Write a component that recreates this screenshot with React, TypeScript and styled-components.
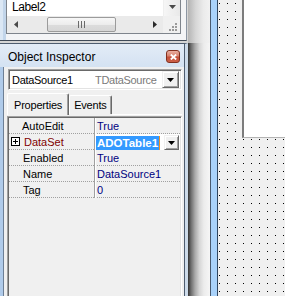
import React from "react";
import styled, { createGlobalStyle } from "styled-components";

const GlobalStyle = createGlobalStyle`
  html, body { margin: 0; padding: 0; }
  body {
    background: #f0f0f0;
    font-family: "Liberation Sans", Arial, sans-serif;
    font-size: 11px;
    color: #000;
    overflow: hidden;
  }
  * { box-sizing: border-box; }
`;

const Screen = styled.div`
  width: 285px;
  height: 296px;
  display: flex;
  overflow: hidden;
  background: #f0f0f0;
`;

const LeftCol = styled.div`
  width: 188px;
  flex: none;
  display: flex;
  flex-direction: column;
  background: #d6d6d6;
`;

/* ---------- top window (partially visible) ---------- */
const TopWin = styled.div`
  height: 41px;
  width: 187px;
  flex: none;
  display: flex;
  flex-direction: column;
  background: linear-gradient(to right, #dbe7f4 0 3px, #c2d5ea 3px 6px, #f3f4f6 6px);
  border-bottom: 1px solid #404a57;
  border-right: 1px solid #8c96a3;
`;

const ListBox = styled.div`
  margin-left: 6px;
  width: 175px;
  height: 34px;
  flex: none;
  border: 1px solid #7e848c;
  border-top: none;
  background: #fff;
  display: grid;
  grid-template-columns: 1fr 17px;
  grid-template-rows: 16px 17px;
`;

const ListItems = styled.div`
  padding-left: 5px;
  font-size: 12px;
  line-height: 15px;
  letter-spacing: -0.4px;
`;

const VScrollEnd = styled.div`
  background: linear-gradient(to right, #f6f6f6, #e9e9e9);
  border-left: 1px solid #efefef;
  display: flex;
  justify-content: center;
  padding-top: 5px;
`;

const HScroll = styled.div`
  display: flex;
  align-items: center;
  background: #eaeaea;
`;

const ArrowBtn = styled.div`
  width: 17px;
  height: 17px;
  flex: none;
  display: flex;
  align-items: center;
  justify-content: center;
`;

const Track = styled.div`
  flex: 1;
  display: flex;
  align-items: center;
  padding-left: 23px;
`;

const Thumb = styled.div`
  width: 69px;
  height: 15px;
  border: 1px solid #9b9b9b;
  border-radius: 2px;
  background: linear-gradient(#f7f7f7, #ececec 50%, #dcdcdc 51%, #d6d6d6);
  display: flex;
  align-items: center;
  justify-content: center;
`;

const GripCell = styled.div`
  background: #f0f0f0;
  display: flex;
  align-items: flex-end;
  justify-content: flex-end;
  padding: 0 3px 2px 0;
`;

/* ---------- object inspector window ---------- */
const OIWin = styled.div`
  flex: 1;
  width: 188px;
  margin-top: 2px;
  display: flex;
  flex-direction: column;
  border-top: 1px solid #4e5d70;
  border-right: 3px solid #cddbea;
`;

const InnerWin = styled.div`
  flex: 1;
  display: flex;
  flex-direction: column;
  border-right: 1px solid #4e5d70;
`;

const TitleBar = styled.div`
  height: 23px;
  flex: none;
  display: flex;
  align-items: center;
  padding: 2px 4px 0 8px;
  background: linear-gradient(#e3ecf7, #d4e2f2);
`;

const TitleText = styled.span`
  flex: 1;
  font-size: 12px;
  color: #000;
`;

const CloseBtn = styled.div`
  width: 14px;
  height: 13px;
  border-radius: 3px;
  border: 1px solid #82301f;
  background: linear-gradient(#eab0a2, #d6806c 45%, #c4503a 55%, #cc6048);
  display: flex;
  align-items: center;
  justify-content: center;
`;

const Body = styled.div`
  flex: 1;
  display: flex;
`;

const LeftFrame = styled.div`
  width: 4px;
  flex: none;
  background: #b0cbea;
  border-right: 1px solid #6d7f95;
`;

const Client = styled.div`
  flex: 1;
  background: #f0f0f0;
  padding: 2px 2px 0 3px;
  display: flex;
  flex-direction: column;
`;

const Combo = styled.div`
  margin-left: 1px;
  height: 21px;
  flex: none;
  display: flex;
  align-items: center;
  border: 1px solid;
  border-color: #a0a0a0 #ffffff #ffffff #a0a0a0;
  box-shadow: inset 1px 1px #696969, inset -1px -1px #e3e3e3;
  background: #fff;
  padding: 2px 2px 2px 3px;
  letter-spacing: -0.3px;
  white-space: nowrap;
`;

const ComboName = styled.span`
  width: 83px;
  flex: none;
`;

const ComboType = styled.span`
  flex: 1;
  color: #7a7a7a;
  overflow: hidden;
`;

const DropBtn = styled.div<{ $w: number; $h: number }>`
  width: ${(p) => p.$w}px;
  height: ${(p) => p.$h}px;
  flex: none;
  margin-left: auto;
  background: #f0f0f0;
  border: 1px solid;
  border-color: #f0f0f0 #696969 #696969 #f0f0f0;
  box-shadow: inset 1px 1px #fff, inset -1px -1px #a0a0a0;
  display: flex;
  align-items: center;
  justify-content: center;
`;

const TabRow = styled.div`
  margin-top: 3px;
  height: 22px;
  flex: none;
  display: flex;
  align-items: flex-end;
`;

const Tab = styled.div<{ $active?: boolean }>`
  height: ${(p) => (p.$active ? 22 : 19)}px;
  padding: 0 ${(p) => (p.$active ? 6 : 4)}px;
  margin-bottom: ${(p) => (p.$active ? 0 : 1)}px;
  display: flex;
  align-items: center;
  justify-content: center;
  border-top: 1px solid #fff;
  border-left: 1px solid #fff;
  border-right: 1px solid #696969;
  box-shadow: inset -1px 0 #a0a0a0;
  border-radius: 2px 2px 0 0;
  background: #f0f0f0;
  font-size: 11px;
  letter-spacing: -0.2px;
`;

const TabFill = styled.div`
  flex: 1;
  align-self: stretch;
  border-bottom: 1px solid #fff;
`;

const Grid = styled.div`
  margin-top: 1px;
  flex: none;
  border: 1px solid;
  border-color: #a0a0a0 #ffffff #ffffff #a0a0a0;
  padding: 1px;
  box-shadow: inset 1px 1px #696969, inset -1px -1px #e3e3e3;
  min-height: 200px;
`;

const Row = styled.div`
  display: grid;
  grid-template-columns: 85px 2px 1fr;
  height: 16px;
`;

const Dotted = `
  background-image: linear-gradient(to right, #a0a0a0 50%, transparent 50%);
  background-size: 2px 1px;
  background-repeat: repeat-x;
  background-position: left bottom;
`;

const LabelCell = styled.div<{ $indent: number; $color?: string }>`
  ${Dotted}
  display: flex;
  align-items: center;
  padding-left: ${(p) => p.$indent}px;
  padding-bottom: 1px;
  color: ${(p) => p.$color || "#000"};
  white-space: nowrap;
`;

const Divider = styled.div`
  border-left: 1px solid #a0a0a0;
  border-right: 1px solid #fff;
`;

const ValueCell = styled.div`
  ${Dotted}
  background-position: 1px bottom;
  display: flex;
  align-items: center;
  padding-left: 1px;
  padding-bottom: 1px;
  color: #000080;
  white-space: nowrap;
`;

const EditCell = styled.div`
  display: flex;
  align-items: center;
  padding: 1px 1px 0 0;
  background: #fff;
  height: 16px;
`;

const Selected = styled.span`
  background: #3399ff;
  color: #fff;
  font-weight: bold;
  font-size: 11.5px;
  height: 14px;
  line-height: 14px;
  padding: 0 1px 0 1px;
`;

const Caret = styled.span`
  width: 1px;
  height: 14px;
  background: #f0901e;
`;

const PlusBox = styled.svg`
  flex: none;
  margin-right: 4px;
`;

/* ---------- right side ---------- */
const ShadowCol = styled.div`
  width: 22px;
  flex: none;
  display: flex;
  flex-direction: column;
`;

const ShadowTop = styled.div`
  height: 43px;
  flex: none;
  background: linear-gradient(to right, #b4b4b4, #d6d6d6 35%, #ebebeb 70%, #f2f2f2);
`;

const ShadowBottom = styled.div`
  flex: 1;
  background: linear-gradient(to right, #333 0%, #6e6e6e 14%, #a9a9a9 32%, #d6d6d6 52%, #ececec 72%, #f6f6f6);
`;

const BlueStrip = styled.div`
  width: 8px;
  flex: none;
  background: #a9d2fa;
  border-left: 1px solid #4a5b70;
  border-right: 1px solid #30465f;
`;

const Designer = styled.div`
  flex: 1;
  display: flex;
  flex-direction: column;
  background-color: #f0f0f0;
  background-image: linear-gradient(to bottom, transparent 1px, #f0f0f0 1px),
    linear-gradient(to right, #000 1px, transparent 1px);
  background-size: 8px 8px, 8px 8px;
  background-position: 1px 3px, 1px 3px;
`;

const DesignerTop = styled.div`
  height: 138px;
  flex: none;
  display: flex;
`;

const FormPanel = styled.div`
  margin-left: 24px;
  flex: 1;
  background: #fff;
  border-left: 2px solid #7c7c7c;
  border-bottom: 1px solid #b4b4b4;
`;

const DownTri = ({ color = "#000" }: { color?: string }) => (
  <svg width="7" height="4" viewBox="0 0 7 4">
    <path d="M0 0H7L3.5 4Z" fill={color} />
  </svg>
);

const rows: { label: string; value: string }[] = [
  { label: "Enabled", value: "True" },
  { label: "Name", value: "DataSource1" },
  { label: "Tag", value: "0" },
];

export default function App() {
  return (
    <>
      <GlobalStyle />
      <Screen>
        <LeftCol>
          <TopWin>
            <ListBox>
              <ListItems>Label2</ListItems>
              <VScrollEnd>
                <DownTri color="#4a4a4a" />
              </VScrollEnd>
              <HScroll>
                <ArrowBtn>
                  <svg width="4" height="7" viewBox="0 0 4 7">
                    <path d="M4 0V7L0 3.5Z" fill="#4a4a4a" />
                  </svg>
                </ArrowBtn>
                <Track>
                  <Thumb>
                    <svg width="7" height="7" viewBox="0 0 7 7">
                      <path d="M0.5 0V7M3.5 0V7M6.5 0V7" stroke="#6a6a6a" strokeWidth="1" />
                    </svg>
                  </Thumb>
                </Track>
                <ArrowBtn>
                  <svg width="4" height="7" viewBox="0 0 4 7">
                    <path d="M0 0V7L4 3.5Z" fill="#2a2a2a" />
                  </svg>
                </ArrowBtn>
              </HScroll>
              <GripCell>
                <svg width="8" height="8" viewBox="0 0 8 8">
                  <g fill="#9a9a9a">
                    <rect x="6" y="0" width="2" height="2" />
                    <rect x="3" y="3" width="2" height="2" />
                    <rect x="6" y="3" width="2" height="2" />
                    <rect x="0" y="6" width="2" height="2" />
                    <rect x="3" y="6" width="2" height="2" />
                    <rect x="6" y="6" width="2" height="2" />
                  </g>
                </svg>
              </GripCell>
            </ListBox>
          </TopWin>

          <OIWin>
            <InnerWin>
              <TitleBar>
                <TitleText>Object Inspector</TitleText>
                <CloseBtn>
                  <svg width="7" height="6" viewBox="0 0 7 6">
                    <path d="M0.8 0.5L6.2 5.5M6.2 0.5L0.8 5.5" stroke="#fff" strokeWidth="1.8" />
                  </svg>
                </CloseBtn>
              </TitleBar>
              <Body>
                <LeftFrame />
                <Client>
                  <Combo>
                    <ComboName>DataSource1</ComboName>
                    <ComboType>TDataSource</ComboType>
                    <DropBtn $w={17} $h={17}>
                      <DownTri />
                    </DropBtn>
                  </Combo>
                  <TabRow>
                    <Tab $active>Properties</Tab>
                    <Tab>Events</Tab>
                    <TabFill />
                  </TabRow>
                  <Grid>
                    <Row>
                      <LabelCell $indent={13}>AutoEdit</LabelCell>
                      <Divider />
                      <ValueCell>True</ValueCell>
                    </Row>
                    <Row>
                      <LabelCell $indent={2} $color="#800000">
                        <PlusBox width="9" height="9" viewBox="0 0 9 9">
                          <rect x="0.5" y="0.5" width="8" height="8" fill="#fff" stroke="#000" />
                          <path d="M2 4.5H7M4.5 2V7" stroke="#000" strokeWidth="1" />
                        </PlusBox>
                        DataSet
                      </LabelCell>
                      <Divider />
                      <EditCell>
                        <Selected>ADOTable1</Selected>
                        <Caret />
                        <DropBtn $w={15} $h={15}>
                          <DownTri />
                        </DropBtn>
                      </EditCell>
                    </Row>
                    {rows.map((r) => (
                      <Row key={r.label}>
                        <LabelCell $indent={14}>{r.label}</LabelCell>
                        <Divider />
                        <ValueCell>{r.value}</ValueCell>
                      </Row>
                    ))}
                  </Grid>
                </Client>
              </Body>
            </InnerWin>
          </OIWin>
        </LeftCol>

        <ShadowCol>
          <ShadowTop />
          <ShadowBottom />
        </ShadowCol>
        <BlueStrip />
        <Designer>
          <DesignerTop>
            <FormPanel />
          </DesignerTop>
        </Designer>
      </Screen>
    </>
  );
}
